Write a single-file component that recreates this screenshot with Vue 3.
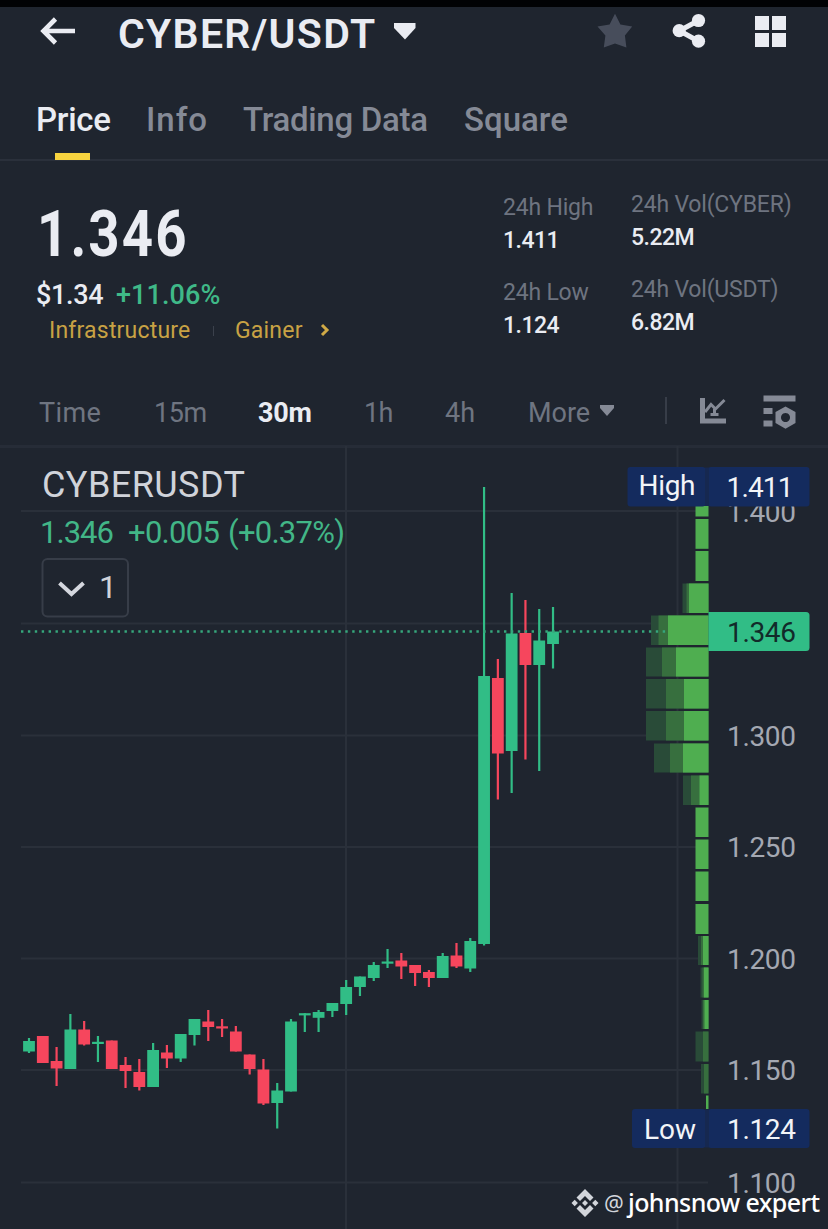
<template>
  <div class="page">
    <div class="status-bar"></div>
    <header class="header">
      <svg class="back" width="36" height="28" viewBox="0 0 36 28">
        <path d="M15.500 2 3.500 14l12 12M3.500 14H35" />
      </svg>
      <h1 class="pair">CYBER/USDT</h1>
      <svg class="caret" width="22" height="17" viewBox="0 0 22 17">
        <path d="M0 0h21.500v5L11 16.500 0 5z" />
      </svg>
      <svg class="star" width="36" height="36" viewBox="0 0 36 36">
        <path d="m18 .800 5.400 10.600 11.800 2.200-7.300 8.800 1.500 12L18 30.500 6.800 34.400l1.600-12L.500 13.600l12.100-2.200z" />
      </svg>
      <svg class="share" width="34" height="36" viewBox="0 0 34 36">
        <path d="M26.500 7.500 7.500 17.700 26.500 28.200" />
        <circle cx="7.200" cy="17.700" r="6.600" />
        <circle cx="26.500" cy="7.500" r="6.600" />
        <circle cx="26.500" cy="28.200" r="6.600" />
      </svg>
      <div class="apps"><i></i><i></i><i></i><i></i></div>
    </header>

    <nav class="tabs">
      <a v-for="tab in tabs" :key="tab" :class="['tab', tab.split(' ')[0].toLowerCase(), { active: tab === activeTab }]" @click="activeTab = tab">{{ tab }}</a>
    </nav>

    <section class="summary">
      <div class="price-box">
        <div class="last-price">1.346</div>
        <div class="fiat"><span class="usd">$1.34</span><span class="change">+11.06%</span></div>
        <div class="tags">
          <span class="infra">Infrastructure</span>
          <i class="tag-line"></i>
          <span class="gainer">Gainer</span>
          <svg width="10" height="14" viewBox="0 0 10 14"><path d="m2 2 5 5-5 5" /></svg>
        </div>
      </div>
      <div class="stats">
        <div class="stat"><label>24h High</label><b>1.411</b></div>
        <div class="stat"><label>24h Low</label><b>1.124</b></div>
      </div>
      <div class="stats volume">
        <div class="stat"><label>24h Vol(CYBER)</label><b>5.22M</b></div>
        <div class="stat"><label>24h Vol(USDT)</label><b>6.82M</b></div>
      </div>
    </section>

    <div class="intervals">
      <span class="time">Time</span>
      <span class="m15">15m</span>
      <span class="m30 selected">30m</span>
      <span class="h1">1h</span>
      <span class="h4">4h</span>
      <span class="more">More</span>
      <svg class="more-caret" width="14" height="11" viewBox="0 0 14 11"><path d="M0 0h14v3L7 11 0 3z" /></svg>
      <i class="split"></i>
      <svg class="tool" width="26" height="26" viewBox="0 0 26 26">
        <path d="M2.500 0v23H26" class="axis" />
        <path d="m5 14 6-7.500 4.500 4.500 9-9M10.500 16.500h8M14.500 11v5" class="trend" />
      </svg>
      <svg class="tool settings" width="33" height="34" viewBox="0 0 33 34">
        <path d="M.500.500h32v6h-32zM.500 13h9v6h-9zM.500 25.500h9v6h-9z" />
        <path fill-rule="evenodd" d="m22.500 11.500 10 5.600v11l-10 5.600-10-5.600v-11zm0 6.500a4.500 4.500 0 1 0 .010 0z" />
      </svg>
    </div>

    <svg class="chart" width="828" height="783" viewBox="0 446 828 783">
      <g class="grid">
        <path d="M346 446V1229M677.500 446V1229" />
        <path v-for="y in gridRows" :key="y" :d="`M21 ${y}H708`" />
      </g>

      <g v-for="(c, i) in candles" :key="i" :class="c[0] === 'g' ? 'up' : 'down'">
        <rect :x="candleX(i) - 1.100" :y="c[1]" width="2.200" :height="c[4] - c[1]" />
        <rect :x="candleX(i) - 5.900" :y="c[2]" width="11.800" :height="c[3] - c[2]" />
      </g>

      <!-- volume profile: outer, middle and inner bands share the right edge -->
      <g v-for="(p, i) in profile" :key="'p' + i">
        <rect v-if="p[4]" class="outer" :x="p[4]" :y="p[0]" :width="708.500 - p[4]" :height="p[1] - p[0]" />
        <rect v-if="p[3]" class="middle" :x="p[3]" :y="p[0]" :width="708.500 - p[3]" :height="p[1] - p[0]" />
        <rect v-if="p[2]" class="inner" :x="p[2]" :y="p[0]" :width="708.500 - p[2]" :height="p[1] - p[0]" />
      </g>
      <path class="last-line" d="M21 631.500H666" />

      <g class="scale">
        <text v-for="s in scale" :key="s[0]" x="727" :y="s[1]" textLength="69">{{ s[0] }}</text>
      </g>

      <g class="marker">
        <rect x="627.500" y="467" width="78" height="39.500" rx="3" />
        <rect x="708" y="467" width="101.500" height="39.500" rx="3" />
        <path d="M705 467.500h4v38.500h-4z" />
        <text x="638.500" y="494.500" textLength="57">High</text>
        <text x="726.500" y="497" textLength="67">1.411</text>
        <rect x="632" y="1109" width="73.500" height="39" rx="3" />
        <rect x="708" y="1109" width="101.500" height="39" rx="3" />
        <path d="M705 1109.500h4v38h-4z" />
        <text x="644" y="1138.500" textLength="52">Low</text>
        <text x="727" y="1138.500" textLength="69">1.124</text>
      </g>
      <path class="last-box" d="M708.500 612H806q3.500 0 3.500 3.500V647.500q0 3.500-3.500 3.500H708.500z" />
      <text class="last-text" x="727" y="642" textLength="69">1.346</text>

      <text class="symbol" x="42" y="497" textLength="203">CYBERUSDT</text>
      <g class="legend">
        <text x="40" y="543" textLength="74">1.346</text>
        <text x="128" y="543" textLength="92">+0.005</text>
        <text x="228" y="543" textLength="117">(+0.37%)</text>
      </g>
      <rect class="toggle" x="42.500" y="559" width="85.500" height="57.500" rx="5" />
      <path class="chevron" d="m59.500 583 12 11 12-11" />
      <text class="count" x="99" y="598">1</text>

      <g class="watermark">
        <path class="logo" d="m585 1189 8.500 8.500-3.500 3.500-5-5-5 5-3.500-3.500zM585 1217l8.500-8.500-3.500-3.500-5 5-5-5-3.500 3.500zM571.500 1203l3.200-3.200 3.200 3.200-3.200 3.200zM592.100 1203l3.200-3.200 3.200 3.200-3.200 3.200zM582 1203l3-3 3 3-3 3z" />
        <text class="at" x="604" y="1211" textLength="20">@</text>
        <text x="628" y="1212" textLength="192">johnsnow expert</text>
      </g>
    </svg>
  </div>
</template>

<script setup>
import { ref } from 'vue';

const tabs = ['Price', 'Info', 'Trading Data', 'Square'];
const activeTab = ref('Price');

const gridRows = [511, 623.5, 735.5, 847, 958.5, 1070, 1182.5];

const scale = [
  ['1.400', 522],
  ['1.300', 745.5],
  ['1.250', 857],
  ['1.200', 968.5],
  ['1.150', 1080],
  ['1.100', 1193],
];

const candleX = (i) => 29 + i * 13.79;

// color, wick top, body top, body bottom, wick bottom
const candles = [
  ['g', 1038, 1041, 1051.5, 1053],
  ['r', 1036, 1036, 1063, 1063],
  ['r', 1047, 1061, 1068.5, 1086],
  ['g', 1014, 1029.5, 1069, 1069],
  ['r', 1021, 1029.5, 1044.5, 1045.5],
  ['g', 1036, 1041.8, 1044, 1062],
  ['r', 1040.5, 1040.5, 1069, 1069],
  ['r', 1057, 1065, 1071, 1088],
  ['r', 1059, 1072, 1087, 1090.5],
  ['g', 1043, 1050, 1087, 1087],
  ['r', 1045, 1052.5, 1058.5, 1068],
  ['g', 1034, 1034, 1058.5, 1062],
  ['g', 1019, 1019, 1035, 1045.5],
  ['r', 1010, 1021.5, 1027, 1041],
  ['r', 1019, 1026.3, 1028.5, 1037],
  ['r', 1026, 1031.5, 1051.5, 1051.5],
  ['r', 1054.5, 1054.5, 1069, 1074.5],
  ['r', 1059, 1069.5, 1103.5, 1105],
  ['g', 1083, 1090.5, 1103, 1128.5],
  ['g', 1019, 1021.5, 1091.5, 1091.5],
  ['g', 1013.2, 1013.2, 1015.4, 1032],
  ['g', 1010, 1012, 1017.8, 1032],
  ['g', 1003, 1003, 1011, 1017],
  ['g', 980, 987, 1004, 1015],
  ['g', 976.5, 976.5, 987, 996],
  ['g', 962, 965, 978, 981],
  ['g', 949, 961.5, 963.7, 968],
  ['r', 953, 960.5, 966.5, 979],
  ['r', 965, 965, 973, 986],
  ['r', 970, 972, 978, 987],
  ['g', 953, 956, 978, 978],
  ['r', 943, 955.5, 966.5, 968],
  ['g', 938, 941, 968.5, 972],
  ['g', 487, 676, 944, 945.5],
  ['r', 659, 678, 753.5, 799.5],
  ['g', 593, 633.5, 751, 793],
  ['r', 600, 633, 665, 759.5],
  ['g', 609, 640.5, 665, 771],
  ['g', 607, 631.5, 644, 668.5],
];

// top, bottom, inner x, middle x, outer x
const profile = [
  [506, 516.5, 695.5],
  [519, 548.8, 695.5],
  [551, 581, 695.5],
  [583.5, 613, 689, 686.5, 682.5],
  [615.5, 645, 668, 658.5, 651],
  [647.5, 676.5, 676, 662, 646],
  [679, 708.5, 684, 666, 646],
  [711, 740.5, 684, 666, 646],
  [743.5, 772.5, 683, 670, 654],
  [775.5, 805, 699.5, 691, 683],
  [807.5, 837, 695.5],
  [839.5, 869, 695.5],
  [871.5, 901, 695.5],
  [904, 934, 695.5],
  [936, 965, 703, 701, 698],
  [967.5, 997.5, 704, 702.5, 700.5],
  [1000, 1029, 704.5, 703, 701.5],
  [1031.5, 1061.5, 0, 703, 695.5],
  [1064, 1093.5, 0, 704, 701],
  [1095.5, 1109, 706],
];
</script>

<style>
body {
  margin: 0;
  background: #1f252f;
}
</style>

<style scoped>
.page {
  width: 828px;
  height: 1229px;
  overflow: hidden;
  background: #1f252f;
  color: #eaecf2;
  font-family: Roboto, "Liberation Sans", sans-serif;
}
.status-bar {
  height: 7px;
  background: #010204;
}
.header {
  display: flex;
  align-items: center;
  height: 50px;
  padding: 0 42px 0 40px;
}
.back {
  margin-top: -3px;
  fill: none;
  stroke: #eaecf2;
  stroke-width: 4.6;
}
.pair {
  width: 258px;
  margin: 3px 0 0 42px;
  font-size: 41px;
  font-weight: 600;
  letter-spacing: 1.3px;
  line-height: 48px;
  white-space: nowrap;
}
.caret {
  margin: -2px 0 0 18px;
  fill: #eaecf2;
}
.star {
  margin: -2px 0 0 auto;
  fill: #474d5b;
}
.share {
  margin: -2px 1px 0 39px;
  fill: #eaecf2;
}
.share path {
  fill: none;
  stroke: #eaecf2;
  stroke-width: 5;
}
.apps {
  display: grid;
  grid-template-columns: 14px 14px;
  gap: 3px;
  margin: -2px 0 0 48px;
}
.apps i {
  height: 14px;
  background: #eaecf2;
}
.tabs {
  display: flex;
  box-sizing: border-box;
  height: 104px;
  padding: 43px 0 0 36px;
  border-bottom: 2px solid #2a303b;
  color: #858a96;
  font-size: 33px;
  font-weight: 500;
  line-height: 40px;
  white-space: nowrap;
}
.tab.price {
  width: 110px;
  letter-spacing: -0.3px;
}
.tab.info {
  width: 97px;
  letter-spacing: 1px;
}
.tab.trading {
  width: 221px;
  letter-spacing: -0.3px;
}
.tab.active {
  color: #eaecf2;
}
.tab.active::after {
  content: "";
  display: block;
  width: 35px;
  height: 7px;
  margin: 13px 0 0 19px;
  background: #f7d33f;
}
.summary {
  display: flex;
  height: 227px;
}
.price-box {
  width: 503px;
}
.last-price {
  width: 150px;
  margin: 35px 0 0 37px;
  font-size: 65px;
  font-weight: 700;
  letter-spacing: 2.5px;
  line-height: 76px;
  transform: scaleX(0.84);
  transform-origin: left;
}
.fiat {
  display: flex;
  margin: 8px 0 0 36px;
  font-size: 27px;
  font-weight: 500;
  letter-spacing: -0.3px;
  line-height: 30px;
}
.usd { width: 80px; }
.change {
  color: #3fb988;
  letter-spacing: 0.1px;
}
.tags {
  display: flex;
  align-items: center;
  margin: 6px 0 0 49px;
  color: #c8a244;
  font-size: 23px;
  letter-spacing: 0.2px;
  line-height: 30px;
}
.tags svg {
  margin: -2px 0 0 17px;
  fill: none;
  stroke: #d0aa46;
  stroke-width: 3;
}
.infra { width: 164px; }
.tag-line {
  width: 1px;
  height: 10px;
  background: #3b414c;
}
.gainer {
  width: 68px;
  margin-left: 21px;
}
.stats {
  width: 128px;
  padding-top: 32px;
  letter-spacing: -0.2px;
  white-space: nowrap;
}
.volume {
  width: 190px;
  padding-top: 29px;
}
.stat {
  height: 85px;
  line-height: 30px;
}
.stat label {
  display: block;
  color: #6e7480;
  font-size: 23px;
}
.stat b {
  display: block;
  margin-top: 3px;
  font-size: 23px;
  font-weight: 500;
  letter-spacing: -0.5px;
}
.intervals {
  display: flex;
  align-items: center;
  box-sizing: border-box;
  height: 60px;
  padding: 0 0 7px 39px;
  border-bottom: 3px solid #262c37;
  color: #6f7581;
  font-size: 27px;
  white-space: nowrap;
}
.time {
  width: 115px;
  letter-spacing: 0.4px;
}
.m15 {
  width: 104px;
  letter-spacing: -0.4px;
}
.m30 { width: 106px; }
.h1 {
  width: 81px;
  letter-spacing: -0.7px;
}
.h4 { width: 83px; }
.more { width: 72px; }
.selected {
  color: #eaecf2;
  font-weight: 700;
  letter-spacing: -0.3px;
}
.more-caret {
  margin: -5px 0 0 0;
  fill: #858a96;
}
.split {
  width: 2px;
  height: 27px;
  margin: -5px 0 0 51px;
  background: #373d48;
}
.tool {
  margin: -5px 0 0 33px;
  fill: none;
  stroke: #858a96;
}
.axis { stroke-width: 5; }
.trend { stroke-width: 3; }
.settings {
  margin: -3px 0 0 37px;
  fill: #858a96;
  stroke: none;
}
.chart {
  display: block;
  margin-top: -2px;
  font-size: 28px;
}
.grid {
  fill: none;
  stroke: #2a303a;
  stroke-width: 2;
}
.last-line {
  fill: none;
  stroke: #36a77c;
  stroke-width: 2.4;
  stroke-dasharray: 2.4 4.5;
}
.up { fill: #31bd86; }
.down { fill: #f6465d; }
.outer { fill: #294b38; }
.middle { fill: #376f3e; }
.inner { fill: #4fae50; }
.scale { fill: #a4a8b2; }
.marker rect { fill: #142b5e; }
.marker path { fill: #162850; }
.marker text { fill: #f2f4f8; }
.last-box { fill: #31bd86; }
.last-text { fill: #122a2a; }
.symbol {
  fill: #d0d3da;
  font-size: 36px;
}
.legend {
  fill: #42b687;
  font-size: 31px;
}
.toggle {
  fill: none;
  stroke: #373d48;
  stroke-width: 2;
}
.chevron {
  fill: none;
  stroke: #d4d7de;
  stroke-width: 4;
}
.count {
  fill: #d0d3da;
  font-size: 32px;
}
.watermark {
  fill: #fff;
  font-family: "Noto Sans", sans-serif;
  font-size: 25px;
  font-weight: 500;
}
.logo,
.at {
  fill: #d2d5db;
}
.at {
  font-size: 22px;
  font-weight: 400;
}
</style>
